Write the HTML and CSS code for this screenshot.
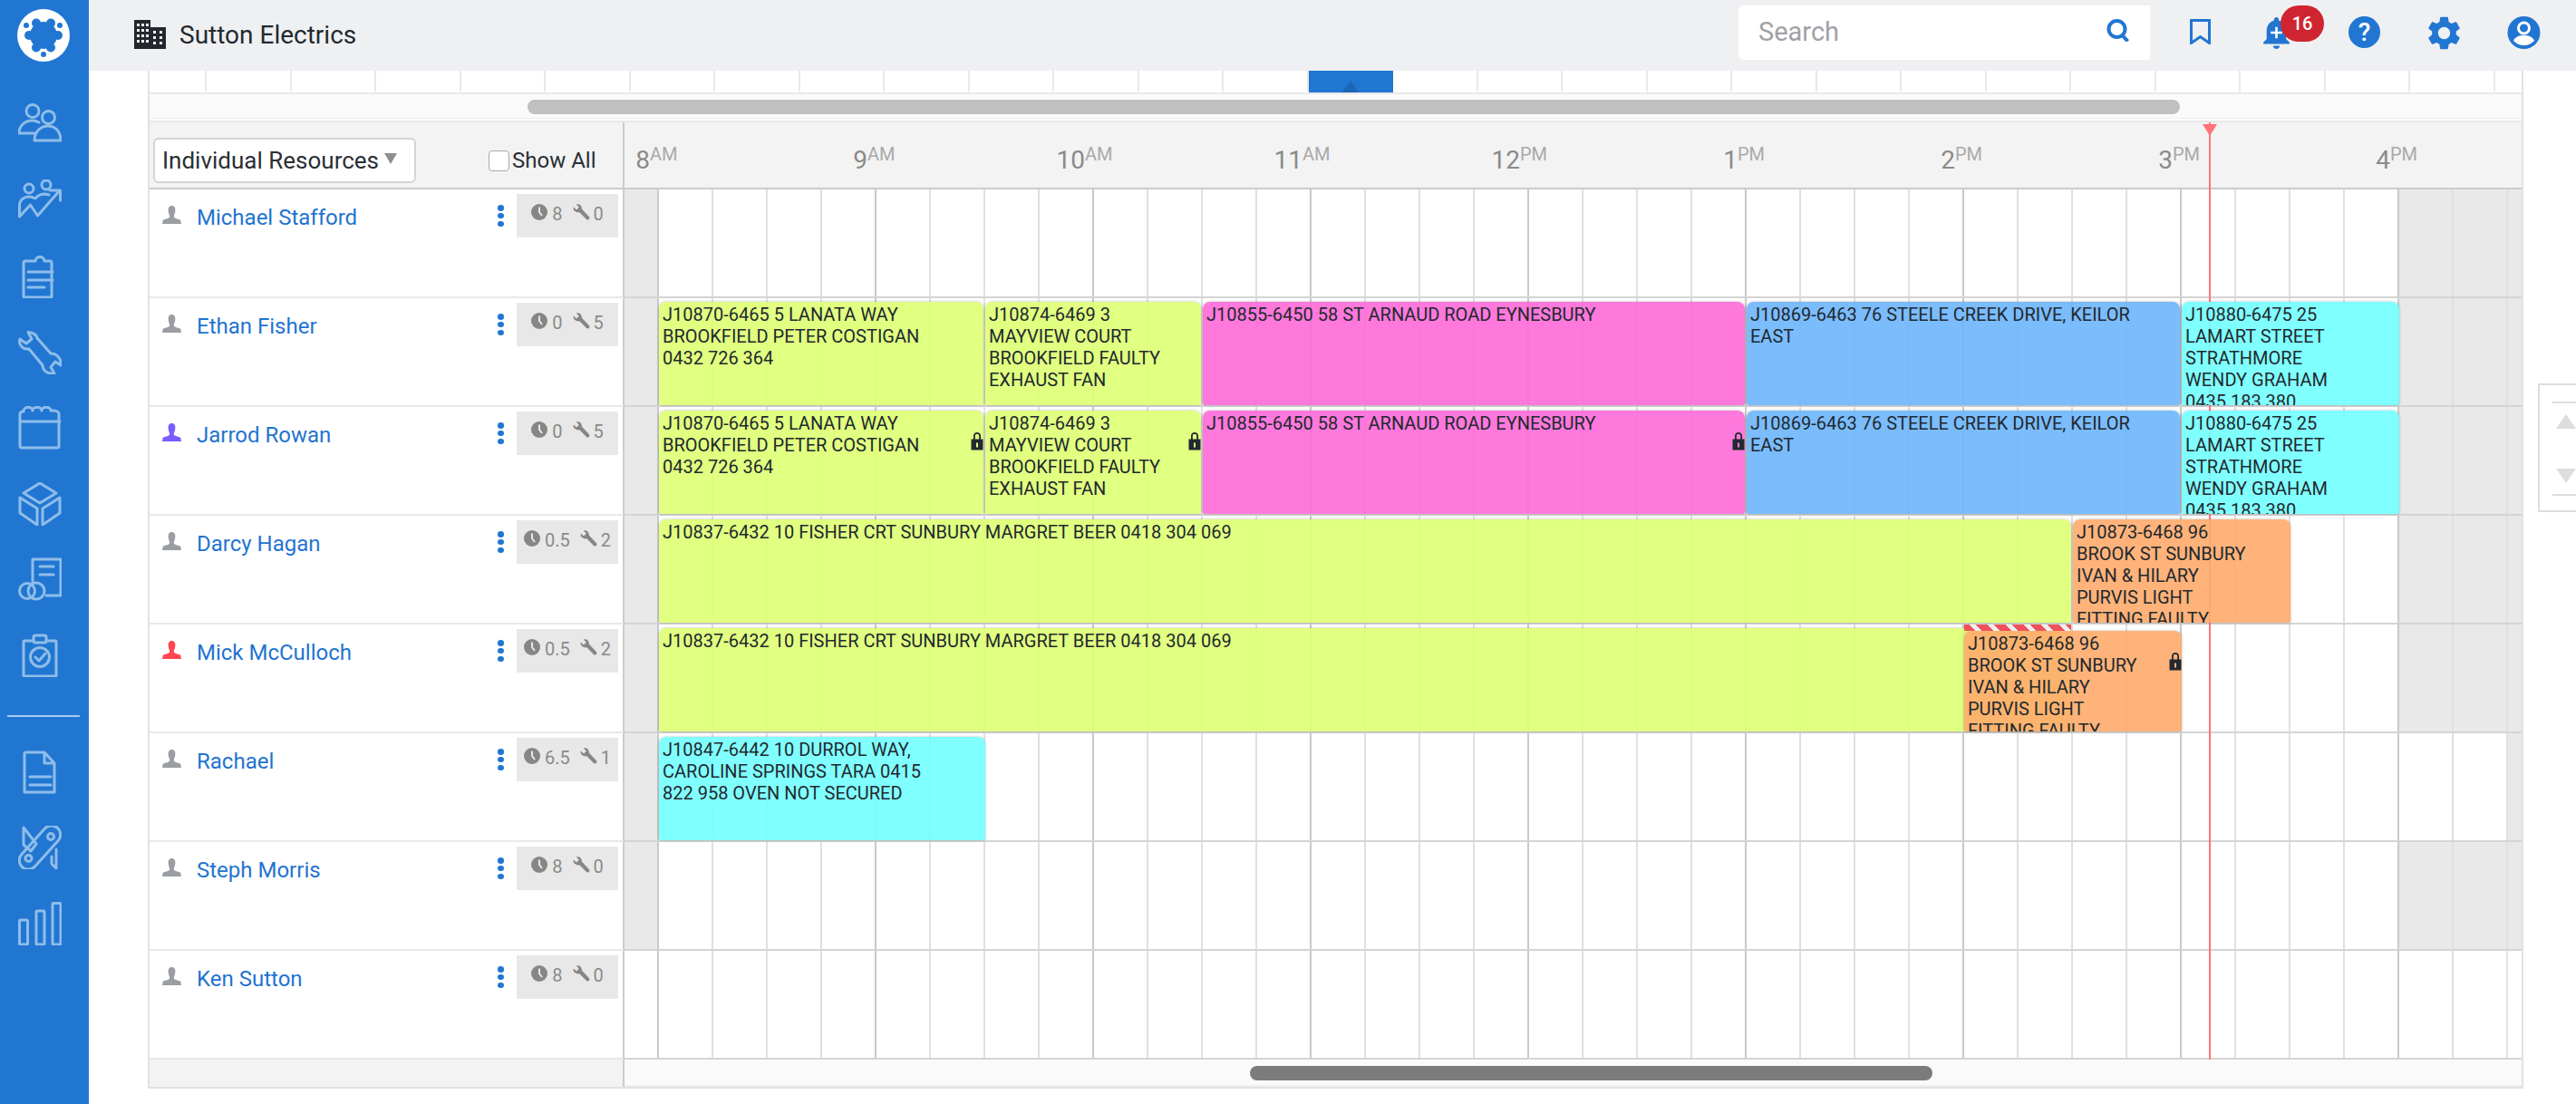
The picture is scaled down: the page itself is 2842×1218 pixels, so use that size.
FILE: index.html
```html
<!DOCTYPE html>
<html lang="en">
<head>
<meta charset="utf-8">
<title>Sutton Electrics</title>
<link rel="stylesheet" href="styles.css">
</head>
<body>
<svg class="sprite" aria-hidden="true">
  <symbol id="person" viewBox="0 0 21 20"><path d="M10.5 0C7.6 0 6.6 2.4 6.6 5c0 3 1.6 5 1.6 7 0 2-5 2.6-7.4 3.8L0 20h21l-.8-4.2C17.8 14.6 12.8 14 12.8 12c0-2 1.6-4 1.6-7 0-2.6-1-5-3.900-5z"/></symbol>
  <symbol id="clock" viewBox="0 0 18 18"><circle cx="9" cy="9" r="9"/><path d="M9 3.500V9l3 4" fill="none" stroke="#e8e8e8" stroke-width="2"/></symbol>
  <symbol id="wrench" viewBox="0 0 19 18"><path d="M.8 3.500 4 6.500l2.800-2.800L3.800.6C7-.6 10.300 2 9.800 5.500l8 8.500c1.700 2-.6 4.700-2.800 3L7.300 9.300C3.800 10 -.4 7.500.8 3.500z"/></symbol>
  <symbol id="lock" viewBox="0 0 14 21"><path fill-rule="evenodd" d="M3 9V5.500C3 3 4.800 1.500 7 1.500S11 3 11 5.500V9h2.500v12H.5V9zM4.800 9h4.400V5.500C9.200 4 8.300 3.200 7 3.200S4.800 4 4.800 5.500zM6 13v5h2v-5z" transform="translate(0 -1.500)"/></symbol>
</svg>

<div class="app">
  <nav class="side">
    <svg class="logo" viewBox="0 0 58 58">
      <circle cx="29" cy="29" r="29" fill="#fff"/>
      <g fill="#2176d2">
        <circle cx="29" cy="29" r="15"/>
        <circle cx="21" cy="15.500" r="5"/><circle cx="37" cy="15.500" r="5"/>
        <circle cx="45" cy="29" r="5"/><circle cx="37" cy="42.500" r="5"/>
        <circle cx="21" cy="42.500" r="5"/><circle cx="13" cy="29" r="5"/>
        <circle cx="10" cy="18" r="3"/><circle cx="47" cy="18" r="3"/><circle cx="29" cy="50" r="3"/>
      </g>
    </svg>
    <svg class="nav-ico first" viewBox="0 0 48 48"><circle cx="16" cy="8.500" r="7"/><circle cx="33.500" cy="15.500" r="7"/><path d="M18 41h29c0-10-6-16-14-16s-15 6-15 16zM18 33H1c0-8 6-14 15-14 3 0 5 1 7 2"/></svg>
    <svg class="nav-ico" viewBox="0 0 48 48"><circle cx="12" cy="10" r="5"/><circle cx="31" cy="6" r="5"/><path d="M1.500 41V29C1.500 22 7 19 12 19c3 0 5 1 7 2 2-3 6-5 11-5l4 1M1.500 41l12-13 8 12L46 12M35 12h11.500v11"/></svg>
    <svg class="nav-ico" viewBox="0 0 48 48"><path d="M13 7h6c0-6 10-6 10 0h6a2 2 0 0 1 2 2v37a1 1 0 0 1-1 1H7a1 1 0 0 1-1-1V9a2 2 0 0 1 2-2z"/><path d="M11 19h27M11 28h27M11 36h18"/></svg>
    <svg class="nav-ico" viewBox="0 0 48 48"><path d="M11 1.500 15 9l-6 5L2 9C0 15 5 21 12 20l15 18c0 6 6 10 13 9l-4-7 5-6 6 4c1-7-4-13-11-13L21 8c-1-4-4-6-10-6.500z"/></svg>
    <svg class="nav-ico" viewBox="0 0 48 48"><path d="M2 44V9a3 3 0 0 1 3-3h1c0-6 10-6 10-1 0-5 10-5 10 0 0-5 10-5 10 0 0 0 9-1 9 4v35a2 2 0 0 1-2 2H4a2 2 0 0 1-2-2zM2 17h44"/></svg>
    <svg class="nav-ico" viewBox="0 0 48 48"><path d="M24 1 42 12 24 23 6 12zM2 17l19 12v18L2 34zM46 17 27 29v18l19-13z"/></svg>
    <svg class="nav-ico" viewBox="0 0 48 48"><path d="M16 27V2h31v40H31M24 10h15M24 19h15"/><circle cx="10" cy="37" r="8.500"/><circle cx="20" cy="37" r="9"/></svg>
    <svg class="nav-ico" viewBox="0 0 48 48"><path d="M17 8H7a1 1 0 0 0-1 1v37a1 1 0 0 0 1 1h34a1 1 0 0 0 1-1V9a1 1 0 0 0-1-1H31"/><rect x="17" y="2" width="14" height="8" rx="2"/><circle cx="24" cy="26" r="10.500"/><path d="m19 26 4 4 7-8"/></svg>
    <hr class="nav-rule">
    <svg class="nav-ico after-rule" viewBox="0 0 48 48"><path d="M8 2h21l11 12v32H7V3zM29 2v12h11M13 29h23M13 38h23"/></svg>
    <svg class="nav-ico" viewBox="0 0 48 48"><rect x="-5" y="14" width="58" height="20" rx="10" transform="rotate(-48 24 24)"/><circle cx="11.500" cy="36" r="3.500"/><circle cx="36" cy="12" r="3.500"/><path d="M6 2v19l8 7L20 20zM42 26v21l-5-5v-8"/></svg>
    <svg class="nav-ico" viewBox="0 0 48 48"><rect x="1.500" y="20" width="9" height="27" rx="1"/><rect x="20" y="10" width="9" height="37" rx="1"/><rect x="38" y="1.500" width="9" height="45.500" rx="1"/></svg>
  </nav>

  <main class="main">
    <header class="topbar">
      <svg class="building" viewBox="0 0 35 32">
        <path fill="#23282e" d="M0 0h18v8h17v24H0z"/>
        <path fill="#eff0f2" d="M3 4h3v3H3zM8 4h3v3H8zM13 4h3v3h-3zM3 10h3v3H3zM8 10h3v3H8zM13 10h3v3h-3zM3 16h3v3H3zM8 16h3v3H8zM13 16h3v3h-3zM3 22h3v3H3zM8 22h3v3H8zM13 22h3v3h-3zM21 12h3v3h-3zM28 12h3v3h-3zM21 18h3v3h-3zM28 18h3v3h-3zM21 24h3v3h-3zM28 24h3v3h-3z"/>
      </svg>
      <span class="company">Sutton Electrics</span>
      <div class="search">
        <span class="search-text">Search</span>
        <svg class="search-ico" viewBox="0 0 27 25"><circle cx="11.500" cy="11" r="9" /><path d="m17.500 18 6 6.500"/></svg>
      </div>
      <svg class="ico bookmark" viewBox="0 0 23 28"><path d="M1.500 1.500h20v25l-10-7-10 7z"/></svg>
      <div class="bell-wrap">
        <svg class="bell" viewBox="4 2 16 20"><path d="M12 22c1.100 0 2-.9 2-2h-4c0 1.100.9 2 2 2zm6-6v-5c0-3.070-1.640-5.640-4.500-6.320V4c0-.83-.67-1.500-1.500-1.500s-1.500.67-1.500 1.500v.68C7.630 5.360 6 7.920 6 11v5l-2 2v1h16v-1l-2-2z"/><path fill="#fff" d="M11.300 8.500h1.400v2.800h2.800v1.400h-2.800v2.800h-1.400v-2.800H8.500v-1.400h2.800z"/></svg>
        <span class="badge">16</span>
      </div>
      <div class="help">?</div>
      <svg class="gear" viewBox="2.500 2 19 20"><path d="M19.140 12.940c.04-.3.060-.61.060-.94 0-.32-.02-.64-.07-.94l2.030-1.580c.18-.14.23-.41.120-.61l-1.920-3.320c-.12-.22-.37-.29-.59-.22l-2.390.96c-.5-.38-1.030-.7-1.620-.94l-.36-2.540c-.04-.24-.24-.41-.48-.41h-3.840c-.24 0-.43.170-.47.410l-.36 2.540c-.59.240-1.130.570-1.620.940l-2.390-.96c-.22-.08-.47 0-.59.220L2.740 8.870c-.12.210-.08.470.120.610l2.030 1.580c-.05.3-.09.630-.09.940s.02.640.07.940l-2.030 1.580c-.18.140-.23.410-.12.610l1.920 3.320c.12.220.37.290.59.220l2.390-.96c.5.380 1.030.7 1.620.94l.36 2.540c.05.240.24.410.48.410h3.840c.24 0 .44-.17.47-.41l.36-2.540c.59-.24 1.130-.56 1.620-.94l2.390.96c.22.080.47 0 .59-.22l1.920-3.320c.12-.22.070-.47-.12-.61l-2.010-1.580zM12 15.600c-1.980 0-3.600-1.620-3.600-3.600s1.620-3.600 3.600-3.600 3.600 1.620 3.600 3.600-1.620 3.600-3.600 3.600z"/></svg>
      <svg class="user" viewBox="0 0 37 36"><circle cx="18.500" cy="18" r="18" fill="#2176d2"/><circle cx="18.500" cy="13" r="6" fill="none" stroke="#fff" stroke-width="3"/><path d="M7 27c2-5 7-6 11.500-6S28 22 30 27c-3 3-7 5-11.500 5S10 30 7 27z" fill="#fff"/></svg>
    </header>

    <section class="panel">
      <div class="mini">
        <i class="mini-cell first"></i><i class="mini-cell"></i><i class="mini-cell"></i><i class="mini-cell"></i><i class="mini-cell"></i><i class="mini-cell"></i>
        <i class="mini-cell"></i><i class="mini-cell"></i><i class="mini-cell"></i><i class="mini-cell"></i><i class="mini-cell"></i><i class="mini-cell"></i><i class="mini-cell"></i><i class="mini-cell"></i>
        <i class="mini-cell now"><b></b></i><i class="mini-cell"></i><i class="mini-cell"></i><i class="mini-cell"></i><i class="mini-cell"></i><i class="mini-cell"></i>
        <i class="mini-cell"></i><i class="mini-cell"></i><i class="mini-cell"></i><i class="mini-cell"></i><i class="mini-cell"></i><i class="mini-cell"></i><i class="mini-cell"></i><i class="mini-cell"></i>
        <i class="mini-cell"></i>
      </div>
      <div class="track"><div class="thumb-top"></div></div>
      <div class="head">
        <div class="head-left">
          <div class="select">Individual Resources<i class="caret"></i></div>
          <label class="show-all"><input class="check" type="checkbox">Show All</label>
        </div>
        <div class="hours">
          <div class="hr"><span class="d">8</span><span class="ap">AM</span></div>
          <div class="hr"><span class="d">9</span><span class="ap">AM</span></div>
          <div class="hr"><span class="d">10</span><span class="ap">AM</span></div>
          <div class="hr"><span class="d">11</span><span class="ap">AM</span></div>
          <div class="hr"><span class="d">12</span><span class="ap">PM</span></div>
          <div class="hr"><span class="d">1</span><span class="ap">PM</span></div>
          <div class="hr"><span class="d">2</span><span class="ap">PM</span></div>
          <div class="hr"><span class="d">3</span><span class="ap">PM</span></div>
          <div class="hr"><span class="d">4</span><span class="ap">PM</span></div>
        </div>
      </div>

      <div class="row">
        <div class="res"><svg class="person"><use href="#person"/></svg><a class="name">Michael Stafford</a><span class="dots"><i></i><i></i><i></i></span><div class="load"><svg class="clock"><use href="#clock"/></svg><span>8</span><svg class="wrench"><use href="#wrench"/></svg><span>0</span></div></div>
        <div class="lane off-left off-right"></div>
      </div>

      <div class="row">
        <div class="res"><svg class="person"><use href="#person"/></svg><a class="name">Ethan Fisher</a><span class="dots"><i></i><i></i><i></i></span><div class="load"><svg class="clock"><use href="#clock"/></svg><span>0</span><svg class="wrench"><use href="#wrench"/></svg><span>5</span></div></div>
        <div class="lane off-left off-right">
          <div class="bar lime" style="grid-column:2/8">J10870-6465 5 LANATA WAY BROOKFIELD PETER COSTIGAN 0432 726 364</div>
          <div class="bar lime" style="grid-column:8/12">J10874-6469 3 MAYVIEW COURT BROOKFIELD FAULTY EXHAUST FAN</div>
          <div class="bar pink" style="grid-column:12/22">J10855-6450 58 ST ARNAUD ROAD EYNESBURY</div>
          <div class="bar blue" style="grid-column:22/30">J10869-6463 76 STEELE CREEK DRIVE, KEILOR EAST</div>
          <div class="bar cyan end" style="grid-column:30/34">J10880-6475 25 LAMART STREET STRATHMORE WENDY GRAHAM 0435 183 380</div>
        </div>
      </div>

      <div class="row">
        <div class="res"><svg class="person purple"><use href="#person"/></svg><a class="name">Jarrod Rowan</a><span class="dots"><i></i><i></i><i></i></span><div class="load"><svg class="clock"><use href="#clock"/></svg><span>0</span><svg class="wrench"><use href="#wrench"/></svg><span>5</span></div></div>
        <div class="lane off-left off-right">
          <div class="bar lime" style="grid-column:2/8">J10870-6465 5 LANATA WAY BROOKFIELD PETER COSTIGAN 0432 726 364<svg class="lock"><use href="#lock"/></svg></div>
          <div class="bar lime" style="grid-column:8/12">J10874-6469 3 MAYVIEW COURT BROOKFIELD FAULTY EXHAUST FAN<svg class="lock"><use href="#lock"/></svg></div>
          <div class="bar pink" style="grid-column:12/22">J10855-6450 58 ST ARNAUD ROAD EYNESBURY<svg class="lock"><use href="#lock"/></svg></div>
          <div class="bar blue" style="grid-column:22/30">J10869-6463 76 STEELE CREEK DRIVE, KEILOR EAST</div>
          <div class="bar cyan end" style="grid-column:30/34">J10880-6475 25 LAMART STREET STRATHMORE WENDY GRAHAM 0435 183 380</div>
        </div>
      </div>

      <div class="row">
        <div class="res"><svg class="person"><use href="#person"/></svg><a class="name">Darcy Hagan</a><span class="dots"><i></i><i></i><i></i></span><div class="load"><svg class="clock"><use href="#clock"/></svg><span>0.5</span><svg class="wrench"><use href="#wrench"/></svg><span>2</span></div></div>
        <div class="lane off-left off-right">
          <div class="bar lime" style="grid-column:2/28">J10837-6432 10 FISHER CRT SUNBURY MARGRET BEER 0418 304 069</div>
          <div class="bar orange end" style="grid-column:28/32">J10873-6468 96 BROOK ST SUNBURY IVAN &amp; HILARY PURVIS LIGHT FITTING FAULTY</div>
        </div>
      </div>

      <div class="row">
        <div class="res"><svg class="person red"><use href="#person"/></svg><a class="name">Mick McCulloch</a><span class="dots"><i></i><i></i><i></i></span><div class="load"><svg class="clock"><use href="#clock"/></svg><span>0.5</span><svg class="wrench"><use href="#wrench"/></svg><span>2</span></div></div>
        <div class="lane off-left off-right">
          <div class="bar lime" style="grid-column:2/28">J10837-6432 10 FISHER CRT SUNBURY MARGRET BEER 0418 304 069</div>
          <div class="bar orange end shifted" style="grid-column:26/30">J10873-6468 96 BROOK ST SUNBURY IVAN &amp; HILARY PURVIS LIGHT FITTING FAULTY<svg class="lock"><use href="#lock"/></svg></div>
          <div class="conflict" style="grid-column:26/28"></div>
        </div>
      </div>

      <div class="row">
        <div class="res"><svg class="person"><use href="#person"/></svg><a class="name">Rachael</a><span class="dots"><i></i><i></i><i></i></span><div class="load"><svg class="clock"><use href="#clock"/></svg><span>6.5</span><svg class="wrench"><use href="#wrench"/></svg><span>1</span></div></div>
        <div class="lane off-left off-tail">
          <div class="bar cyan end" style="grid-column:2/8">J10847-6442 10 DURROL WAY, CAROLINE SPRINGS TARA 0415 822 958 OVEN NOT SECURED</div>
        </div>
      </div>

      <div class="row">
        <div class="res"><svg class="person"><use href="#person"/></svg><a class="name">Steph Morris</a><span class="dots"><i></i><i></i><i></i></span><div class="load"><svg class="clock"><use href="#clock"/></svg><span>8</span><svg class="wrench"><use href="#wrench"/></svg><span>0</span></div></div>
        <div class="lane off-left off-right"></div>
      </div>

      <div class="row">
        <div class="res"><svg class="person"><use href="#person"/></svg><a class="name">Ken Sutton</a><span class="dots"><i></i><i></i><i></i></span><div class="load"><svg class="clock"><use href="#clock"/></svg><span>8</span><svg class="wrench"><use href="#wrench"/></svg><span>0</span></div></div>
        <div class="lane"></div>
      </div>

      <div class="foot">
        <div class="foot-left"></div>
        <div class="foot-track"><div class="thumb-bottom"></div></div>
      </div>

      <div class="now-line"></div>
    </section>
  </main>

  <aside class="stepper">
    <i class="step-line"></i>
    <i class="tri-up"></i>
    <i class="tri-down"></i>
    <i class="step-line"></i>
  </aside>
</div>
</body>
</html>
```

FILE: styles.css
```css
* { box-sizing: border-box; }
html, body { margin: 0; height: 100%; overflow: hidden; background: #fff; }
body { font-family: Roboto, "Liberation Sans", sans-serif; color: #22292f; }
.sprite { display: none; }

.app { display: flex; height: 1218px; width: 2842px; position: relative; }

/* sidebar */
.side { width: 98px; flex: none; background: #2176d2; display: flex; flex-direction: column; align-items: flex-start; padding-left: 20px; }
.logo { width: 58px; height: 58px; margin: 10px 0 0 -1px; flex: none; }
.nav-ico { width: 48px; height: 48px; flex: none; margin-top: 35.500px; fill: none; stroke: #8fbde9; stroke-width: 3; stroke-linejoin: round; stroke-linecap: round; }
.nav-ico.first { margin-top: 46px; }
.nav-rule { width: 80px; height: 2px; margin: 42px 0 0 -12px; border: 0; background: #a5cbef; flex: none; }
.nav-ico.after-rule { margin-top: 37px; }

/* top bar */
.main { flex: 1; min-width: 0; display: flex; flex-direction: column; }
.topbar { height: 78px; flex: none; background: #eff0f2; display: flex; align-items: center; padding-left: 50px; }
.building { width: 35px; height: 32px; margin-top: -2px; flex: none; }
.company { font-size: 28px; margin-left: 15px; color: #22292f; margin-top: -2px; }
.search { width: 454px; height: 60px; margin-left: auto; margin-top: -6px; background: #fff; border-radius: 6px 0 0 6px; display: flex; align-items: center; padding-left: 22px; position: relative; }
.search-text { font-size: 29px; color: #a0a1a6; margin-top: -2px; }
.search-ico { width: 27px; height: 25px; margin-left: auto; margin-right: 21px; margin-top: -6px; fill: none; stroke: #2176d2; stroke-width: 4; }
.ico { flex: none; }
.bookmark { width: 23px; height: 28px; margin-left: 44px; margin-top: -8px; fill: none; stroke: #2176d2; stroke-width: 3; }
.bell-wrap { position: relative; width: 35px; height: 36px; margin-left: 55px; margin-top: -6px; flex: none; }
.bell { width: 35px; height: 36px; fill: #2176d2; display: block; }
.badge { position: absolute; left: 22px; top: -12px; width: 48px; height: 40px; border-radius: 20px; background: #cf2530; color: #fff; font-size: 20px; font-weight: 500; display: flex; align-items: center; justify-content: center; }
.help { width: 35px; height: 35px; margin-left: 62px; margin-top: -7px; border-radius: 50%; background: #2176d2; color: #fff; font-size: 28px; font-weight: 500; display: flex; align-items: center; justify-content: center; flex: none; }
.gear { width: 37px; height: 37px; margin-left: 52px; margin-top: -6px; fill: #2176d2; flex: none; }
.user { width: 37px; height: 36px; margin-left: 51px; margin-right: 39px; margin-top: -7px; flex: none; }

/* panel */
.panel { position: relative; width: 2621px; margin-left: 65px; border-left: 2px solid #e2e2e2; border-right: 2px solid #e2e2e2; border-bottom: 2px solid #e2e2e2; flex: none; height: 1123px; display: flex; flex-direction: column; }
.mini { height: 26px; flex: none; display: flex; border-bottom: 2px solid #e8e8e8; padding-bottom: 1px; }
.mini-cell { width: 93.500px; flex: none; border-right: 2px solid #e8e8e8; display: block; }
.mini-cell.first { width: 63px; }
.mini-cell.now { background: #2176d2; border-right: 0; display: flex; align-items: flex-end; justify-content: center; margin-bottom: -1px; }
.mini-cell.now b { width: 0; height: 0; border-left: 9px solid transparent; border-right: 9px solid transparent; border-bottom: 13px solid #1b65b5; }
.track { height: 31px; flex: none; padding-top: 6px; background: linear-gradient(#fafafa 0 26px, #eee 26px 27px, #fff 27px 29px, #e8e8e8 29px); }
.thumb-top { margin-left: 417px; width: 1823px; height: 16px; border-radius: 8px; background: #c0c0c0; }

/* header row */
.head { height: 74px; flex: none; display: flex; background: #f3f3f3; border-bottom: 2px solid #ccc; }
.head-left { width: 524px; flex: none; border-right: 2px solid #ccc; display: flex; align-items: flex-start; padding-top: 17px; padding-left: 4px; }
.select { width: 290px; height: 50px; background: #fff; border: 2px solid #d4d4d4; border-radius: 6px; font-size: 26px; line-height: 46px; padding-left: 8px; display: flex; color: #2a2f34; }
.caret { width: 0; height: 0; margin: 15px 0 0 6px; border-left: 7px solid transparent; border-right: 7px solid transparent; border-top: 12px solid #8f8f8f; }
.show-all { display: flex; align-items: center; height: 50px; margin-left: 80px; font-size: 24px; color: #2a2f34; }
.check { appearance: none; width: 23px; height: 23px; margin: 0 3px 0 0; background: #fff; border: 1px solid #a8a8a8; border-radius: 4px; }
.hours { flex: 1; min-width: 0; display: flex; overflow: hidden; padding-top: 26px; }
.hr { width: 240px; flex: none; display: flex; align-items: flex-start; }
.d { width: 28px; flex: none; display: flex; justify-content: flex-end; font-size: 28px; line-height: 32px; color: #8a8a8a; white-space: nowrap; }
.ap { font-size: 20px; line-height: 22px; margin-top: -2px; color: #a9a9a9; }

/* rows */
.row { height: 120px; flex: none; display: flex; }
.res { width: 524px; flex: none; display: flex; align-items: flex-start; border-right: 2px solid #ccc; border-bottom: 2px solid #e8e8e8; }
.person { width: 21px; height: 20px; margin: 18px 0 0 14px; flex: none; fill: #9a9ea3; }
.person.purple { fill: #7a5cff; }
.person.red { fill: #ff4652; }
.name { font-size: 24px; line-height: 28px; margin: 17px 0 0 17px; color: #1f74d0; }
.dots { margin: 17px 14px 0 auto; width: 7px; height: 24px; display: flex; flex-direction: column; justify-content: space-between; }
.dots i { width: 7px; height: 6.500px; border-radius: 50%; background: #2176d2; display: block; }
.load { width: 112px; height: 48px; margin: 5px 5px 0 0; flex: none; background: #e8e8e8; display: flex; align-items: center; justify-content: center; font-size: 20px; color: #8a8a8a; padding-bottom: 4px; }
.clock { width: 18px; height: 18px; fill: #868686; margin-right: 5px; margin-top: -4px; flex: none; }
.wrench { width: 19px; height: 18px; fill: #868686; margin: -4px 4px 0 11px; flex: none; }

.lane {
  --lines: repeating-linear-gradient(90deg, #c9c9c9 0 2px, transparent 2px 240px) 36px 0,
           repeating-linear-gradient(90deg, #e0e0e0 0 2px, transparent 2px 60px) 36px 0;
  --rgt: linear-gradient(#fff, #fff) 0 0 / 0 0 no-repeat;
  flex: 1; min-width: 0; display: grid; grid-template-columns: 36px repeat(34, 60px) 1fr; grid-template-rows: 1fr;
  border-bottom: 2px solid #d4d4d4;
  background: var(--lines), var(--rgt);
  background-color: #fff;
}
.off-left { background: var(--lines), linear-gradient(#e9e9e9, #e9e9e9) 0 0 / 36px 100% no-repeat, var(--rgt); background-color: #fff; }
.off-right { --rgt: linear-gradient(#e9e9e9, #e9e9e9) 100% 0 / 135px 100% no-repeat; }
.off-tail { --rgt: linear-gradient(#e9e9e9, #e9e9e9) 100% 0 / 16px 100% no-repeat; }

.bar { position: relative; z-index: 2; grid-row: 1; margin: 4px 0 0 2px; padding: 2px 34px 0 4px; border-radius: 8px 8px 2px 2px; overflow: hidden; font-size: 20px; line-height: 24px; color: #22292f; box-shadow: 0 0 3px rgba(0, 0, 0, .28); }
.bar.end { margin-right: -2px; }
.bar.shifted { margin-top: 7px; z-index: 3; }
.lime { background: rgba(222, 255, 114, .9); }
.pink { background: rgba(255, 105, 216, .9); }
.blue { background: rgba(108, 181, 252, .9); }
.cyan { background: rgba(114, 255, 255, .9); }
.orange { background: rgba(255, 171, 108, .9); }
.lock { position: absolute; right: 0; top: 24px; width: 14px; height: 21px; fill: #22292f; }
.conflict { position: relative; z-index: 4; grid-row: 1; align-self: start; height: 7px; margin-left: 2px; background: repeating-linear-gradient(45deg, #f0525c 0 9px, #efefef 9px 14px); }

/* footer */
.foot { flex: 1; min-height: 0; display: flex; }
.foot-left { width: 524px; flex: none; background: #f3f3f3; border-right: 2px solid #ccc; }
.foot-track { flex: 1; background: linear-gradient(#fafafa 0 28px, #eee 28px); padding-top: 7px; }
.thumb-bottom { margin-left: 690px; width: 753px; height: 16px; border-radius: 8px; background: #7c7c7c; }

/* now marker: sits over the rows */
.now-line { position: absolute; left: 2272px; top: 57px; bottom: 30px; width: 2px; background: #ff7378; z-index: 1; }
.now-line::before { content: ""; position: absolute; left: -7px; top: 2px; border-left: 8px solid transparent; border-right: 8px solid transparent; border-top: 13px solid #ff7378; }

/* stepper floating at the right */
.stepper { position: absolute; right: 0; top: 423px; width: 42px; height: 142px; background: #fff; border: 2px solid #ddd; border-right: 0; display: flex; flex-direction: column; align-items: flex-end; padding-top: 18px; }
.step-line { width: 26px; height: 2px; background: #ddd; display: block; }
.tri-up { width: 0; height: 0; margin: 12px 0 0; border-left: 11px solid transparent; border-right: 11px solid transparent; border-bottom: 16px solid #ddd; }
.tri-down { width: 0; height: 0; margin: 44px 0 12px; border-left: 11px solid transparent; border-right: 11px solid transparent; border-top: 16px solid #ddd; }
```
